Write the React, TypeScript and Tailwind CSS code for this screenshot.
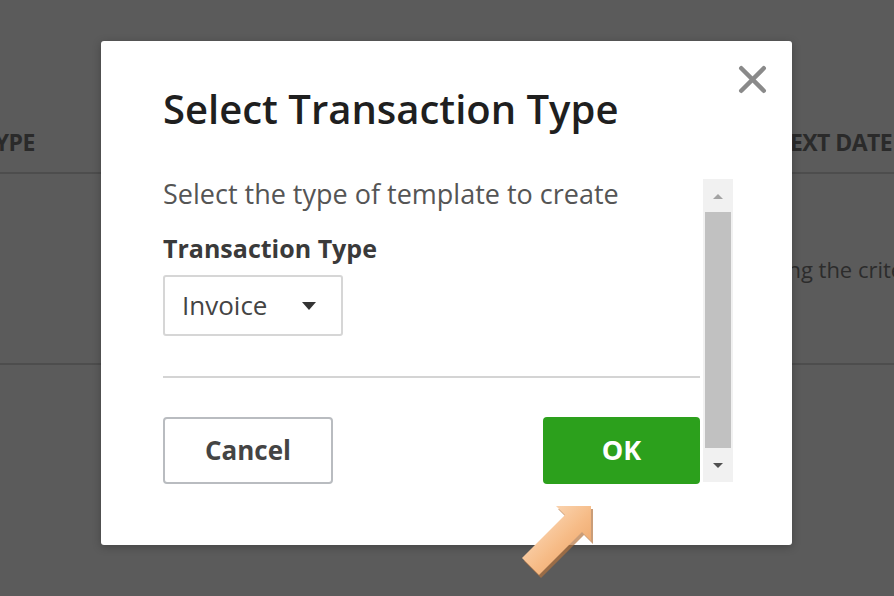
import { X } from 'lucide-react'

function Scrollbar() {
  return (
    <div className="ml-[3px] mt-[1px] flex h-[303px] w-[30px] flex-col items-center self-start bg-[#f1f1f1] pt-[2px]">
      <div className="flex h-[31px] items-center justify-center">
        <div className="h-0 w-0 border-x-[5px] border-b-[5px] border-x-transparent border-b-[#a3a3a3]" />
      </div>
      <div className="h-[236px] w-[26px] bg-[#c1c1c1]" />
      <div className="flex h-[34px] items-center justify-center">
        <div className="h-0 w-0 border-x-[5px] border-t-[5px] border-x-transparent border-t-[#505050]" />
      </div>
    </div>
  )
}

function PointerArrow() {
  return (
    <svg className="absolute left-[505px] top-[498px]" width="100" height="96" viewBox="505 498 100 96">
      <defs>
        <linearGradient id="peach" x1="0" y1="0" x2="1" y2="1">
          <stop offset="0" stopColor="#fde6cf" />
          <stop offset="0.55" stopColor="#f6bb86" />
          <stop offset="1" stopColor="#e89a5c" />
        </linearGradient>
      </defs>
      <polygon points="593,509 593,544 584,535 541,578 524,561 567,518 558,509" fill="#b4743f" opacity="0.7" />
      <polygon points="591,506 591,541 582,532 539,575 522,558 565,515 556,506" fill="url(#peach)" />
    </svg>
  )
}

export default function App() {
  return (
    <div className="relative h-[596px] w-[894px] overflow-hidden bg-[#5b5b5b] font-['Open_Sans',sans-serif]">
      {/* page behind the overlay */}
      <div className="flex h-[174px] items-end justify-between border-b-2 border-[#4d4d4d] pb-[13px] text-[23px] font-bold tracking-tight text-[#2a2a2a]">
        <span className="-ml-[18px]">TYPE</span>
        <span className="mr-[2px] whitespace-nowrap">NEXT DATE</span>
      </div>
      <div className="flex h-[191px] items-center justify-end border-b-2 border-[#4d4d4d] pt-[2px] text-[22px] text-[#2c2c2c]">
        <span className="-mr-[36px] whitespace-nowrap">No templates matching the criteria</span>
      </div>

      {/* dialog */}
      <div className="absolute left-[101px] top-[41px] h-[504px] w-[691px] rounded-[3px] bg-white shadow-[0_2px_8px_rgba(0,0,0,0.25)]">
        <button className="absolute right-[17px] top-[16px] text-[#8a8a8a]">
          <X size={45} strokeWidth={2.4} />
        </button>
        <div className="pl-[62px] pt-[43px]">
          <h1 className="text-[40px] leading-[50px] font-semibold text-[#1f1f1f]">Select Transaction Type</h1>
          <div className="mt-[44px] flex">
            <div className="flex w-[537px] flex-col">
              <p className="text-[27px] leading-[32px] text-[#555]">Select the type of template to create</p>
              <label className="mt-[22px] text-[25px] leading-[32px] font-bold text-[#3a3a3a]">Transaction Type</label>
              <div className="mt-[11px] flex h-[61px] w-[180px] items-center justify-between rounded-[3px] border-2 border-[#d6d6d6] pl-[17px] pr-[25px] text-[26px] text-[#444]">
                <span>Invoice</span>
                <div className="h-0 w-0 border-x-[7px] border-t-[8px] border-x-transparent border-t-[#333]" />
              </div>
              <div className="mt-[40px] h-[2px] bg-[#d4d4d4]" />
              <div className="mt-[39px] flex justify-between">
                <button className="h-[67px] w-[170px] rounded-[4px] border-2 border-[#b9bcc0] text-[26px] font-bold text-[#444]">Cancel</button>
                <button className="h-[67px] w-[157px] rounded-[4px] bg-[#2ca01c] text-[27px] font-bold text-white">OK</button>
              </div>
            </div>
            <Scrollbar />
          </div>
        </div>
      </div>

      <PointerArrow />
    </div>
  )
}
